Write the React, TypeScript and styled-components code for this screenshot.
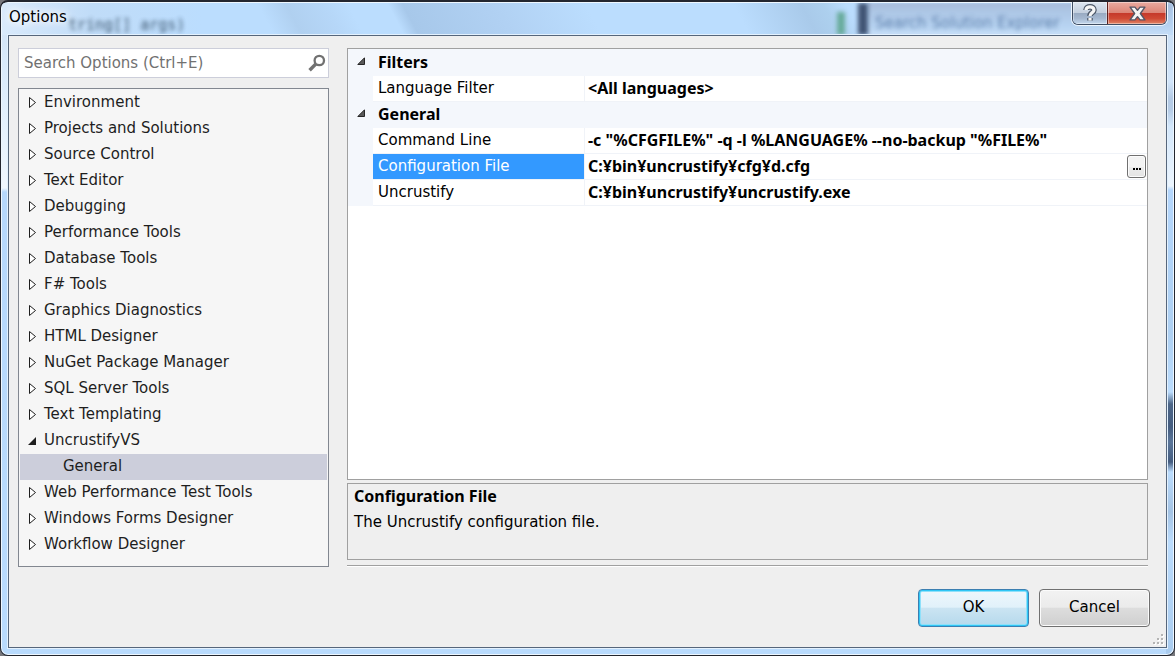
import React from "react";
import styled, { createGlobalStyle } from "styled-components";

const GlobalStyle = createGlobalStyle`
  *, *::before, *::after { box-sizing: border-box; }
  body {
    margin: 0;
    background: #77777c;
    color: #000;
    font-family: "DejaVu Sans", Verdana, sans-serif;
    font-size: 15px;
    line-height: 24px;
  }
  button, input { font: inherit; color: inherit; }
`;

const boldFamily = `"Noto Sans", "DejaVu Sans", sans-serif`;

const sideLight = `linear-gradient(180deg, #c9def4 0, #d2e5fa 80px, #b4cae5 96px, #b6cce6 108px, #d3e7fb 124px, #ecf5fe 184px, #b4d6fc 188px, #aed0f2 330px, #bbdcfd 390px, #4d6688 402px, #455d80 425px, #5a7599 440px, #455d80 460px, #bbdcfd 470px, #a4c3e4 510px, #bbdcfd 540px, #a9cbee 100%)`;

const sideLeft = `linear-gradient(180deg, #cfe2f6 0, #dcecfc 80px, #f0f7fe 186px, #b6d8fc 190px, #b9dbfd 100%)`;

const Window = styled.div`
  position: relative;
  display: flex;
  flex-direction: column;
  min-height: 100vh;
  padding: 0 7px 7px;
  border: 1px solid #23262f;
  border-top-width: 2px;
  border-radius: 8px;
  overflow: hidden;
  box-shadow: inset 0 0 0 1px #eef7ff;
  background:
    ${sideLeft} left top / 8px 100% no-repeat,
    ${sideLight} right top / 8px 100% no-repeat,
    linear-gradient(90deg, #b9dbfd 0 78%, #b3d2f2 90%, #b9dbfd 100%);
`;

const Glass = styled.div`
  position: absolute;
  inset: 1px 1px auto 1px;
  height: 32px;
  overflow: hidden;
  background:
    linear-gradient(62deg, transparent 0 240px, #b0d0f0 265px, #b6d7f8 300px, transparent 320px),
    linear-gradient(62deg, transparent 0 355px, #a7c8ea 368px, #b1d1f3 450px, transparent 530px),
    linear-gradient(62deg, transparent 0 660px, #a9caea 720px, #add0ee 740px, transparent 760px),
    linear-gradient(90deg, #d9eafb 0, #c0dcf8 90px, #bbddfe 200px, #bbddfe 100%);
`;

const SolutionPane = styled.div`
  position: absolute;
  inset: 0 0 0 866px;
  background: linear-gradient(180deg, #a9bddb 0, #adc7e6 30%, #b8d4f2 75%, #c7def7 100%);
  filter: blur(1px);
`;

const PaneEdge = styled.div`
  position: absolute;
  inset: 0 auto 0 856px;
  width: 10px;
  background: #415474;
  filter: blur(2px);
`;

const ChangeMark = styled.div`
  position: absolute;
  inset: 9px auto 0 835px;
  width: 8px;
  background: #68ab9c;
  filter: blur(2px);
`;

const Ghost = styled.span<{ $mono?: boolean }>`
  position: absolute;
  top: ${(p) => (p.$mono ? "10px" : "8px")};
  left: ${(p) => (p.$mono ? "66px" : "873px")};
  line-height: 24px;
  white-space: pre;
  font-family: ${(p) => (p.$mono ? `"DejaVu Sans Mono", monospace` : `"DejaVu Sans", sans-serif`)};
  font-size: 15px;
  color: ${(p) => (p.$mono ? "#2f4860" : "#5577a4")};
  opacity: 0.9;
  filter: blur(2px);
`;

const TitleBar = styled.header`
  position: relative;
  display: flex;
  justify-content: space-between;
  align-items: flex-start;
  height: 33px;
`;

const Title = styled.h1`
  margin: 0;
  padding: 3px 1px;
  font-size: 15px;
  font-weight: 400;
  text-shadow: 0 0 6px #fff, 0 0 10px #fff, 0 0 14px #fff;
`;

const CaptionButtons = styled.div`
  display: flex;
  height: 23px;
  border: 1px solid #3f4d62;
  border-top: 0;
  border-radius: 0 0 6px 6px;
  overflow: hidden;
  box-shadow: 0 0 0 1px #eef6fe;
`;

const CaptionButton = styled.button<{ $close?: boolean }>`
  display: flex;
  align-items: center;
  justify-content: center;
  width: ${(p) => (p.$close ? "59px" : "34px")};
  padding: 0;
  border: 0;
  border-left: ${(p) => (p.$close ? "1px solid #5c1f1c" : "0")};
  background: ${(p) =>
    p.$close
      ? "linear-gradient(180deg, #e9aaa0 0, #dc8577 48%, #c5382a 50%, #cf4934 75%, #e08465 100%)"
      : "linear-gradient(180deg, #dce5f0 0, #c3cfde 48%, #98aac1 50%, #a5b8d0 75%, #c4d8ee 100%)"};
  box-shadow: inset 0 0 0 1px rgba(255, 255, 255, 0.4);
`;

const Client = styled.main`
  position: relative;
  display: flex;
  flex: 1;
  flex-direction: column;
  border: 1px solid #56667b;
  box-shadow: 0 0 0 1px #e3f1fe;
  background: #efefef;
`;

const Columns = styled.div`
  display: flex;
  flex: 1;
  gap: 18px;
  padding: 12px 18px 0 9px;
`;

const Sidebar = styled.div`
  display: flex;
  flex: 0 0 311px;
  flex-direction: column;
  gap: 10px;
`;

const SearchBox = styled.label`
  display: flex;
  align-items: center;
  height: 30px;
  padding: 0 2px 0 5px;
  border: 1px solid #ccceda;
  background: #fff;
`;

const SearchInput = styled.input`
  flex: 1;
  min-width: 0;
  padding: 0;
  border: 0;
  outline: 0;
  background: transparent;
  &::placeholder { color: #717171; opacity: 1; }
`;

const Tree = styled.ul`
  flex: 1;
  margin: 0;
  padding: 1px;
  border: 1px solid #828790;
  background: #f6f6f6;
  list-style: none;
`;

const TreeRow = styled.button<{ $selected?: boolean; $child?: boolean }>`
  display: flex;
  align-items: center;
  gap: 6px;
  width: 100%;
  height: 26px;
  padding: 0 0 2px ${(p) => (p.$child ? "43px" : "8px")};
  border: 0;
  background: ${(p) => (p.$selected ? "#cccedb" : "transparent")};
  color: #1e1e1e;
  text-align: left;
  svg { margin-top: 2px; }
`;

const Panel = styled.div`
  display: flex;
  flex: 1;
  flex-direction: column;
  min-width: 0;
`;

const GridBox = styled.div`
  flex: 1;
  padding-top: 1px;
  border: 1px solid #a0a0a0;
  background: #fff linear-gradient(#f4f7fc, #f4f7fc) top / 100% 1px no-repeat;
`;

const Grid = styled.table`
  width: 100%;
  table-layout: fixed;
  border-spacing: 0;
`;

const Gutter = styled.td`
  width: 25px;
  height: 26px;
  padding: 0 0 4px 9px;
  background: #f4f7fc;
  button { display: block; padding: 0; border: 0; background: none; }
  svg { display: block; }
`;

const CategoryCell = styled.th`
  height: 26px;
  padding: 0 0 2px 5px;
  background: #f4f7fc;
  font-family: ${boldFamily};
  font-size: 16px;
  font-weight: 700;
  text-align: left;
`;

const NameCell = styled.th<{ $selected?: boolean }>`
  width: 212px;
  height: 26px;
  padding: 0 0 1px 5px;
  border-right: 1px solid #f0f3f8;
  border-bottom: 1px solid #f0f3f8;
  background: ${(p) => (p.$selected ? "#3399ff" : "#fff")};
  background-clip: padding-box;
  color: ${(p) => (p.$selected ? "#fff" : "#000")};
  font-weight: 400;
  text-align: left;
`;

const ValueCell = styled.td`
  height: 26px;
  padding: 0 1px 0 3px;
  border-bottom: 1px solid #f0f3f8;
  font-family: ${boldFamily};
  font-size: 16px;
  font-weight: 700;
  white-space: nowrap;
`;

const ValueLine = styled.div`
  display: flex;
  align-items: center;
  justify-content: space-between;
  height: 25px;
  padding-bottom: 1px;
`;

const BrowseButton = styled.button`
  display: flex;
  align-items: center;
  justify-content: center;
  width: 19px;
  height: 23px;
  padding: 6px 0 0;
  border: 1px solid #707070;
  border-radius: 3px;
  background: linear-gradient(180deg, #f3f3f3 0 50%, #ececec 50%, #e4e4e4);
  box-shadow: inset 0 0 0 1px #fcfcfc;
`;

const Description = styled.section`
  height: 77px;
  margin-top: 3px;
  padding: 0 6px;
  border: 1px solid #a0a0a0;
`;

const DescriptionTitle = styled.h2`
  margin: 0;
  font-family: ${boldFamily};
  font-size: 16px;
  font-weight: 700;
`;

const DescriptionText = styled.p`
  margin: 2px 0 0;
`;

const Separator = styled.hr`
  width: 100%;
  height: 2px;
  margin: 5px 0 0;
  border: 0;
  border-top: 1px solid #a0a0a0;
  border-bottom: 1px solid #fff;
`;

const Footer = styled.footer`
  display: flex;
  justify-content: flex-end;
  gap: 10px;
  padding: 22px 16px 20px;
`;

const DialogButton = styled.button<{ $primary?: boolean }>`
  width: 111px;
  height: 38px;
  padding: 0 0 2px;
  border: 1px solid ${(p) => (p.$primary ? "#3c7fb1" : "#707070")};
  border-radius: 4px;
  background: ${(p) =>
    p.$primary
      ? "linear-gradient(180deg, #eef7fc 0, #e1f1fa 48%, #cbe4f2 50%, #b5d9ec 100%)"
      : "linear-gradient(180deg, #f2f2f2 0, #ebebeb 48%, #dddddd 50%, #cfcfcf 100%)"};
  box-shadow: inset 0 0 0 1px ${(p) => (p.$primary ? "#2fc6f5, inset 0 0 0 2px #8fe0fa" : "#fbfbfb")};
`;

const Grip = styled.svg`
  position: absolute;
  right: 1px;
  bottom: 1px;
`;

const Collapsed = () => (
  <svg width="10" height="14" viewBox="0 0 10 14" aria-hidden="true">
    <path d="M1.5 1.5 V11.5 L7.5 6.5 Z" fill="#fff" stroke="#1e1e1e" />
  </svg>
);

const Expanded = () => (
  <svg width="10" height="14" viewBox="0 0 10 14" aria-hidden="true">
    <path d="M8 3 V11 H0 Z" fill="#1e1e1e" />
  </svg>
);

const CategoryArrow = () => (
  <svg width="8" height="8" viewBox="0 0 8 8" aria-hidden="true">
    <path d="M7.5 0.8 V7.5 H0.8 Z" fill="#595959" stroke="#262626" />
  </svg>
);

const SearchIcon = () => (
  <svg width="18" height="18" viewBox="0 0 18 18" aria-hidden="true" fill="none" stroke="#717171">
    <circle cx="11.3" cy="6.5" r="4.7" strokeWidth="2.3" />
    <path d="M7.8 10 L1.6 16.2" strokeWidth="3.4" />
  </svg>
);

const HelpIcon = () => {
  const d = "M3 6 C3 1.8 11 1.8 11 6 C11 8.8 7 8.4 7 12 M7 14 V16.6";
  return (
    <svg width="14" height="19" viewBox="0 0 14 19" aria-hidden="true" fill="none">
      <path d={d} stroke="#4d5868" strokeWidth="5.6" />
      <path d={d} stroke="#f5f5f5" strokeWidth="3.2" />
    </svg>
  );
};

const CloseIcon = () => (
  <svg width="17" height="15" viewBox="0 0 16 14" aria-hidden="true">
    <path
      d="M1 1 H5.6 L8 4 L10.4 1 H15 L10.7 7 L15 13 H10.4 L8 10 L5.6 13 H1 L5.3 7 Z"
      fill="#f4f4f4"
      stroke="#535666"
      strokeWidth="1.3"
      strokeLinejoin="round"
    />
  </svg>
);

type TreeItem = { label: string; expanded?: boolean; child?: boolean };

const treeItems: TreeItem[] = [
  { label: "Environment" },
  { label: "Projects and Solutions" },
  { label: "Source Control" },
  { label: "Text Editor" },
  { label: "Debugging" },
  { label: "Performance Tools" },
  { label: "Database Tools" },
  { label: "F# Tools" },
  { label: "Graphics Diagnostics" },
  { label: "HTML Designer" },
  { label: "NuGet Package Manager" },
  { label: "SQL Server Tools" },
  { label: "Text Templating" },
  { label: "UncrustifyVS", expanded: true },
  { label: "General", child: true },
  { label: "Web Performance Test Tools" },
  { label: "Windows Forms Designer" },
  { label: "Workflow Designer" },
];

type Property = { name: string; value: string; selected?: boolean };

const categories: { name: string; properties: Property[] }[] = [
  { name: "Filters", properties: [{ name: "Language Filter", value: "<All languages>" }] },
  {
    name: "General",
    properties: [
      { name: "Command Line", value: '-c "%CFGFILE%" -q -l %LANGUAGE% --no-backup "%FILE%"' },
      { name: "Configuration File", value: "C:¥bin¥uncrustify¥cfg¥d.cfg", selected: true },
      { name: "Uncrustify", value: "C:¥bin¥uncrustify¥uncrustify.exe" },
    ],
  },
];

const gripDots = [[8, 0], [4, 4], [8, 4], [0, 8], [4, 8], [8, 8]];

export default function App() {
  return (
    <>
      <GlobalStyle />
      <Window>
        <Glass aria-hidden="true">
          <SolutionPane />
          <PaneEdge />
          <ChangeMark />
          <Ghost $mono>{"tring[] args)"}</Ghost>
          <Ghost>Search Solution Explorer</Ghost>
        </Glass>
        <TitleBar>
          <Title>Options</Title>
          <CaptionButtons>
            <CaptionButton aria-label="Help"><HelpIcon /></CaptionButton>
            <CaptionButton $close aria-label="Close"><CloseIcon /></CaptionButton>
          </CaptionButtons>
        </TitleBar>
        <Client>
          <Columns>
            <Sidebar>
              <SearchBox>
                <SearchInput type="text" aria-label="Search Options" placeholder="Search Options (Ctrl+E)" />
                <SearchIcon />
              </SearchBox>
              <Tree>
                {treeItems.map((item) => (
                  <li key={item.label}>
                    <TreeRow $child={item.child} $selected={item.child}>
                      {!item.child && (item.expanded ? <Expanded /> : <Collapsed />)}
                      {item.label}
                    </TreeRow>
                  </li>
                ))}
              </Tree>
            </Sidebar>
            <Panel>
              <GridBox>
                <Grid>
                  <colgroup>
                    <col style={{ width: 25 }} />
                    <col style={{ width: 212 }} />
                    <col />
                  </colgroup>
                  <tbody>
                    {categories.map((category) => (
                      <React.Fragment key={category.name}>
                        <tr>
                          <Gutter>
                            <button aria-label={`Collapse ${category.name}`}><CategoryArrow /></button>
                          </Gutter>
                          <CategoryCell colSpan={2}>{category.name}</CategoryCell>
                        </tr>
                        {category.properties.map((property) => (
                          <tr key={property.name}>
                            <Gutter />
                            <NameCell scope="row" $selected={property.selected}>{property.name}</NameCell>
                            <ValueCell>
                              <ValueLine>
                                <span>{property.value}</span>
                                {property.selected && (
                                  <BrowseButton aria-label="Browse">
                                    <svg width="10" height="2" viewBox="0 0 10 2" aria-hidden="true">
                                      <path d="M1 0h2v2h-2z M4 0h2v2h-2z M7 0h2v2h-2z" />
                                    </svg>
                                  </BrowseButton>
                                )}
                              </ValueLine>
                            </ValueCell>
                          </tr>
                        ))}
                      </React.Fragment>
                    ))}
                  </tbody>
                </Grid>
              </GridBox>
              <Description>
                <DescriptionTitle>Configuration File</DescriptionTitle>
                <DescriptionText>The Uncrustify configuration file.</DescriptionText>
              </Description>
              <Separator />
            </Panel>
          </Columns>
          <Footer>
            <DialogButton $primary>OK</DialogButton>
            <DialogButton>Cancel</DialogButton>
          </Footer>
          <Grip width="12" height="12" viewBox="0 0 12 12" aria-hidden="true">
            {gripDots.map(([x, y]) => (
              <g key={`${x}-${y}`}>
                <rect x={x + 1} y={y + 1} width="2" height="2" fill="#fff" />
                <rect x={x} y={y} width="2" height="2" fill="#b4b4b4" />
              </g>
            ))}
          </Grip>
        </Client>
      </Window>
    </>
  );
}
